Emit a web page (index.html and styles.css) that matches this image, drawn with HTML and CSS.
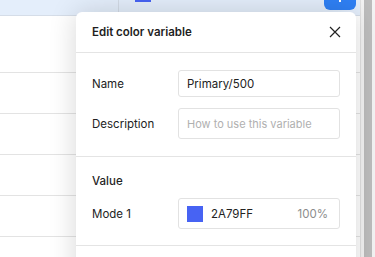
FILE: index.html
```html
<!DOCTYPE html>
<html lang="en">
<head>
<meta charset="UTF-8">
<meta name="viewport" content="width=device-width, initial-scale=1.0">
<title>Edit color variable</title>
<link rel="stylesheet" href="styles.css">
</head>
<body>
<div class="screen">
    <div class="table">
        <div class="row row-head">
            <div class="cell cell-name"></div>
            <div class="cell cell-value"><span class="chip"></span></div>
            <button class="add-btn"><span class="plus"></span></button>
        </div>
        <div class="row row-first"></div>
        <div class="row"></div>
        <div class="row"></div>
        <div class="row"></div>
        <div class="row"></div>
        <div class="row"></div>

        <div class="popover">
            <div class="pop-header">
                <h2>Edit color variable</h2>
                <svg class="close" width="12" height="12" viewBox="0 0 12 12">
                    <path d="M1 1 L11 11 M11 1 L1 11" stroke="#222" stroke-width="1.2" fill="none"/>
                </svg>
            </div>
            <div class="section">
                <div class="field">
                    <label>Name</label>
                    <div class="input input-short">Primary/500</div>
                </div>
                <div class="field">
                    <label>Description</label>
                    <div class="input placeholder">How to use this variable</div>
                </div>
            </div>
            <div class="section section-value">
                <div class="section-title">Value</div>
                <div class="field">
                    <label>Mode 1</label>
                    <div class="input color-input">
                        <span class="swatch"></span>
                        <span class="hex">2A79FF</span>
                        <span class="alpha">100%</span>
                    </div>
                </div>
            </div>
            <div class="section"></div>
        </div>
    </div>
    <div class="scrollbar">
        <div class="thumb"></div>
    </div>
</div>
</body>
</html>
```

FILE: styles.css
```css
* {
    box-sizing: border-box;
}
body {
    margin: 0;
    font-family: Inter, "Noto Sans", sans-serif;
    background-color: #fff;
    color: #1f1f1f;
}
.screen {
    display: flex;
    width: 375px;
    height: 257px;
    overflow: hidden;
}
.table {
    position: relative;
    width: 361px;
    border-right: 1px solid #e2e2e2;
    background-color: #fff;
}
.row {
    height: 41px;
    border-bottom: 1px solid #e3e3e3;
}
.row-first {
    height: 57px;
}
.row-head {
    display: flex;
    align-items: flex-start;
    height: 16px;
    background-color: #e4eefb;
    border-bottom: 1px solid #d5dde8;
}
.cell-name {
    width: 119px;
    height: 100%;
    border-right: 1px solid #d3dbe6;
}
.cell-value {
    flex: 1;
    padding-left: 16px;
}
.chip {
    display: block;
    width: 16px;
    height: 16px;
    margin-top: -14px;
    background-color: #4763f3;
}
.add-btn {
    position: relative;
    width: 32px;
    height: 28px;
    margin-top: -18px;
    margin-right: 4px;
    padding: 0;
    border: none;
    border-radius: 6px;
    background-color: #2f80f5;
}
.plus {
    position: absolute;
    left: 10px;
    top: 8px;
    width: 12px;
    height: 12px;
}
.plus::before,
.plus::after {
    content: "";
    position: absolute;
    background-color: #fff;
}
.plus::before {
    left: 5px;
    top: 0;
    width: 1.5px;
    height: 12px;
}
.plus::after {
    left: 0;
    top: 5px;
    width: 12px;
    height: 1.5px;
}
.popover {
    position: absolute;
    left: 76px;
    top: 12px;
    width: 280px;
    height: 300px;
    background-color: #fff;
    border-radius: 6px 6px 0 0;
    box-shadow: 0 0 28px rgba(0, 0, 0, 0.16);
}
.pop-header {
    display: flex;
    align-items: center;
    justify-content: space-between;
    height: 41px;
    padding: 0 15px 0 16px;
    border-bottom: 1px solid #e4e4e4;
}
.pop-header h2 {
    margin: 0;
    font-size: 11.5px;
    font-weight: 600;
    color: #1e1e1e;
}
.section {
    display: flex;
    flex-direction: column;
    gap: 11px;
    padding: 17px 16px 17px 16px;
    border-bottom: 1px solid #e4e4e4;
}
.section-value {
    gap: 9px;
    padding-top: 16px;
    padding-bottom: 16px;
}
.section-title {
    font-size: 11.5px;
    font-weight: 500;
    line-height: 16px;
}
.field {
    display: grid;
    grid-template-columns: 86px 1fr;
    align-items: center;
}
.field label {
    font-size: 11.5px;
    color: #222;
}
.input {
    display: flex;
    align-items: center;
    height: 31px;
    padding: 0 8px;
    border: 1px solid #e2e2e2;
    border-radius: 3px;
    font-size: 11.5px;
    color: #222;
}
.input-short {
    height: 27px;
}
.placeholder {
    color: #b0b0b0;
    font-size: 11px;
}
.color-input {
    gap: 8px;
}
.swatch {
    width: 16px;
    height: 16px;
    background-color: #4763f3;
}
.hex {
    flex: 1;
}
.alpha {
    color: #8c8c8c;
    padding-right: 3px;
}
.scrollbar {
    flex: 1;
    padding: 0 3px;
    background-color: #f4f4f4;
}
.thumb {
    height: 100%;
    background-color: #bdbdbd;
}
```
